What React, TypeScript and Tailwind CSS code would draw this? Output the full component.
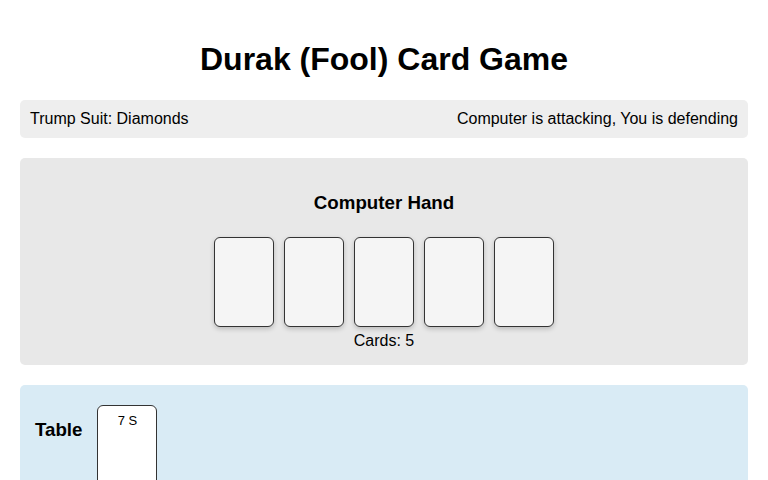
export default function App() {
  const computerCards = [0, 1, 2, 3, 4];

  return (
    <div className="min-h-screen bg-white p-5 text-black" style={{ fontFamily: '"Liberation Sans", Arial, sans-serif' }}>
      <h1 className="my-[21.44px] text-center text-[32px] font-bold leading-[37px]">Durak (Fool) Card Game</h1>

      {/* Status bar */}
      <div className="flex items-center justify-between rounded-[5px] bg-[#eeeeee] p-[10px] text-base leading-[18px]">
        <span>Trump Suit: Diamonds</span>
        <span>Computer is attacking, You is defending</span>
      </div>

      {/* Computer hand */}
      <div className="mt-5 rounded-[5px] bg-[#e8e8e8] p-[15px] text-center">
        <h3 className="my-[18.72px] text-[18.72px] font-bold leading-[21.5px]">Computer Hand</h3>
        <div className="flex justify-center">
          {computerCards.map((c) => (
            <div
              key={c}
              className="m-[5px] h-[90px] w-[60px] rounded-[6px] border border-[#333] bg-[#f5f5f5] shadow-[0_2px_5px_rgba(0,0,0,0.2)]"
            />
          ))}
        </div>
        <div className="text-base leading-[18px]">Cards: 5</div>
      </div>

      {/* Table */}
      <div className="mt-5 flex items-start gap-[10px] rounded-[5px] bg-[#d9ebf5] p-[15px]">
        <h3 className="my-[18.72px] text-[18.72px] font-bold leading-[21.5px]">Table</h3>
        <div className="m-[5px] flex h-[90px] w-[60px] justify-center rounded-[6px] border border-[#333] bg-white pt-[7px] text-[13px] leading-[15px]">
          7 S
        </div>
      </div>
    </div>
  );
}
